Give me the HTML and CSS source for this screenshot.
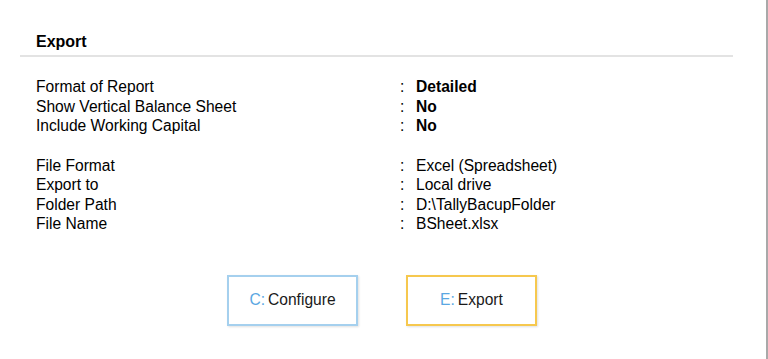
FILE: index.html
```html
<!DOCTYPE html>
<html>
<head>
<meta charset="utf-8">
<link rel="stylesheet" href="styles.css">
</head>
<body>
<div class="screen">
  <div class="title">Export</div>
  <div class="sep"></div>
  <div class="group">
    <div class="row"><span class="label">Format of Report</span><span class="colon">:</span><span class="value bold">Detailed</span></div>
    <div class="row"><span class="label">Show Vertical Balance Sheet</span><span class="colon">:</span><span class="value bold">No</span></div>
    <div class="row"><span class="label">Include Working Capital</span><span class="colon">:</span><span class="value bold">No</span></div>
  </div>
  <div class="group">
    <div class="row"><span class="label">File Format</span><span class="colon">:</span><span class="value">Excel (Spreadsheet)</span></div>
    <div class="row"><span class="label">Export to</span><span class="colon">:</span><span class="value">Local drive</span></div>
    <div class="row"><span class="label">Folder Path</span><span class="colon">:</span><span class="value">D:\TallyBacupFolder</span></div>
    <div class="row"><span class="label">File Name</span><span class="colon">:</span><span class="value">BSheet.xlsx</span></div>
  </div>
  <div class="actions">
    <div class="btn btn-blue"><span class="key">C:</span>Configure</div>
    <div class="btn btn-yellow"><span class="key">E:</span>Export</div>
  </div>
</div>
</body>
</html>
```
FILE: styles.css
```css
html, body {
  margin: 0;
  padding: 0;
  background: #ffffff;
}
body {
  font-family: "Liberation Sans", Arial, sans-serif;
  font-size: 15.6px;
  color: #000;
}
.screen {
  box-sizing: border-box;
  width: 768px;
  height: 359px;
  border-right: 2px solid #a9a9a9;
  padding-top: 32px;
  overflow: hidden;
}
.title {
  font-weight: bold;
  font-size: 16px;
  line-height: 20px;
  padding-left: 36px;
}
.sep {
  margin: 3px 0 0 20px;
  width: 713px;
  height: 2px;
  background: #e3e3e3;
}
.group {
  margin-top: 20px;
}
.group + .group {
  margin-top: 20px;
}
.row {
  display: flex;
  line-height: 19.5px;
  padding-left: 36px;
}
.label {
  width: 364px;
}
.colon {
  width: 16px;
}
.bold {
  font-weight: bold;
}
.actions {
  display: flex;
  gap: 48px;
  padding-left: 227px;
  margin-top: 41px;
}
.btn {
  box-sizing: border-box;
  width: 131px;
  height: 51px;
  display: flex;
  align-items: center;
  justify-content: center;
  color: #1a1a1a;
  box-shadow: 1px 1px 2px rgba(0,0,0,0.12);
}
.btn-blue {
  border: 2px solid #a5d0ee;
}
.btn-yellow {
  border: 2px solid #f6c84e;
}
.key {
  color: #5aa7e2;
  margin-right: 3px;
}
```
